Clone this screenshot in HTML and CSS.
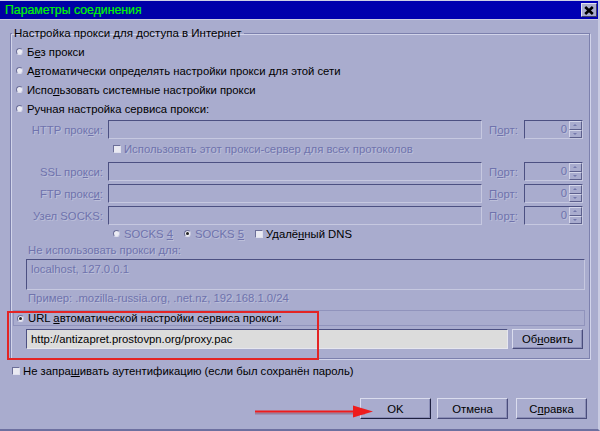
FILE: index.html
```html
<!DOCTYPE html>
<html lang="ru">
<head>
    <meta charset="UTF-8">
    <title>Параметры соединения</title>
    <link rel="stylesheet" href="styles.css">
</head>
<body>
    <div class="window">
        <div class="titlebar">
            <span class="title">Параметры соединения</span>
            <span class="close">
                <svg width="10" height="9" viewBox="0 0 10 9"><path d="M1.2 1 L8.8 8 M8.8 1 L1.2 8" stroke="#000" stroke-width="2.6"/></svg>
            </span>
        </div>

        <div class="client">
            <fieldset class="group">
                <legend>Настройка прокси для доступа в Интернет</legend>

                <div class="opt"><span class="radio"></span><span>Б<u>е</u>з прокси</span></div>
                <div class="opt"><span class="radio"></span><span>А<u>в</u>томатически определять настройки прокси для этой сети</span></div>
                <div class="opt"><span class="radio"></span><span>Испо<u>л</u>ьзовать системные настройки прокси</span></div>
                <div class="opt"><span class="radio"></span><span>Ручная настройка сервиса прокси:</span></div>

                <div class="field-row first">
                    <span class="field-label">HTTP прок<u>с</u>и:</span>
                    <span class="input"></span>
                    <span class="port-label">П<u>о</u>рт:</span>
                    <span class="port"><span class="port-value">0</span><span class="spin"><i></i><i></i></span></span>
                </div>
                <div class="check-row sub"><span class="check"></span><span>Использовать этот прокси-сервер для всех протоколов</span></div>
                <div class="field-row">
                    <span class="field-label">SSL про<u>к</u>си:</span>
                    <span class="input"></span>
                    <span class="port-label">П<u>о</u>рт:</span>
                    <span class="port"><span class="port-value">0</span><span class="spin"><i></i><i></i></span></span>
                </div>
                <div class="field-row">
                    <span class="field-label">FTP прокс<u>и</u>:</span>
                    <span class="input"></span>
                    <span class="port-label"><u>П</u>орт:</span>
                    <span class="port"><span class="port-value">0</span><span class="spin"><i></i><i></i></span></span>
                </div>
                <div class="field-row">
                    <span class="field-label">Узел SOCKS:</span>
                    <span class="input"></span>
                    <span class="port-label">Пор<u>т</u>:</span>
                    <span class="port"><span class="port-value">0</span><span class="spin"><i></i><i></i></span></span>
                </div>

                <div class="socks-row">
                    <span class="socks-item dim"><span class="radio"></span><span>SOCKS <u>4</u></span></span>
                    <span class="socks-item dim"><span class="radio on"></span><span>SOCKS <u>5</u></span></span>
                    <span class="socks-item"><span class="check"></span><span>Удалё<u>н</u>ный DNS</span></span>
                </div>

                <div class="note">Не использовать прокси для:</div>
                <div class="textarea">localhost, 127.0.0.1</div>
                <div class="note">Пример: .mozilla-russia.org, .net.nz, 192.168.1.0/24</div>

                <div class="url-opt"><span class="radio on"></span><span>URL <u>а</u>втоматической настройки сервиса прокси:</span></div>
                <div class="url-row">
                    <span class="url-input">http://antizapret.prostovpn.org/proxy.pac</span>
                    <span class="btn">Об<u>н</u>овить</span>
                </div>
            </fieldset>

            <div class="check-row auth"><span class="check"></span><span>Не запра<u>ш</u>ивать аутентификацию (если был сохранён пароль)</span></div>

            <div class="buttons">
                <span class="btn wide default">OK</span>
                <span class="btn wide">Отмена</span>
                <span class="btn wide">С<u>п</u>равка</span>
            </div>
        </div>

        <!-- annotations drawn over the dialog -->
        <div class="highlight"></div>
        <svg class="arrow" width="130" height="16" viewBox="0 0 130 16">
            <path d="M2 8.5 L112 8.5" stroke="#7a2a40" stroke-width="2" opacity="0.35" transform="translate(0 1)"/>
            <path d="M2 7.5 L112 7.5" stroke="#ee1c1c" stroke-width="2.2"/>
            <path d="M100 1.5 L120 7.5 L100 13.5 Z" fill="#ee1c1c"/>
        </svg>
    </div>
</body>
</html>
```

FILE: styles.css
```css
body {
    margin: 0;
    background: #a9acce;
    font-family: "Liberation Sans", Arial, sans-serif;
    font-size: 11.3px;
    color: #000;
}
u {
    text-decoration-thickness: 1px;
    text-underline-offset: 1px;
}

.window {
    position: relative;
    width: 600px;
    height: 431px;
    box-sizing: border-box;
    background: #a9acce;
    border-top: 1px solid #cfd1e6;
    border-right: 2px solid #c9cbe2;
    border-bottom: 2px solid #6d70a0;
    overflow: hidden;
}

.titlebar {
    height: 18px;
    background: linear-gradient(90deg, #0000a4, #0000b4);
    display: flex;
    align-items: center;
    justify-content: space-between;
    padding: 0 1px 0 5px;
    border-bottom: 1px solid #c9cbe2;
}
.title {
    color: #00f800;
    font-size: 12.3px;
    line-height: 18px;
    -webkit-text-stroke: 0.2px #00f800;
}
.close {
    width: 16px;
    height: 14px;
    box-sizing: border-box;
    background: #a9acce;
    border: 1px solid;
    border-color: #e2e3f0 #3c3f66 #3c3f66 #e2e3f0;
    display: flex;
    align-items: center;
    justify-content: center;
}

.client {
    padding: 7px 0 0 10px;
}

/* group box */
.group {
    margin: 0;
    width: 580px;
    box-sizing: border-box;
    padding: 2px 0 9px 0;
    border: 1px solid #7c80ad;
    box-shadow: inset 1px 1px 0 #d2d4ea, 1px 1px 0 #d2d4ea;
}
.group legend {
    padding: 0 2px;
    margin-left: 1px;
    line-height: 13px;
    font-size: 11.5px;
}

.radio {
    display: inline-block;
    width: 7px;
    height: 7px;
    box-sizing: border-box;
    border-radius: 50%;
    background: #ececf4;
    border: 1px solid;
    border-color: #6b6e98 #c4c6de #dfe0ee #6b6e98;
    margin-right: 4px;
    position: relative;
    flex: none;
}
.radio.on::after {
    content: "";
    position: absolute;
    left: 1px;
    top: 1px;
    width: 3px;
    height: 3px;
    border-radius: 50%;
    background: #222;
}
.check {
    display: inline-block;
    width: 8px;
    height: 8px;
    box-sizing: border-box;
    background: #e9e9f2;
    border: 1px solid;
    border-color: #6b6e98 #dfe0ee #dfe0ee #6b6e98;
    margin-right: 3px;
    flex: none;
}

.opt {
    height: 19px;
    display: flex;
    align-items: center;
    padding-left: 5px;
}

/* manual proxy fields */
.field-row {
    display: flex;
    align-items: center;
    height: 19px;
    margin-top: 3px;
    color: #6f73ad;
    text-shadow: 1px 1px 0 #bcbfda;
}
.field-row.first {
    margin-top: 2px;
}
.field-label {
    width: 97px;
    box-sizing: border-box;
    padding-right: 5px;
    text-align: right;
}
.input {
    width: 374px;
    height: 19px;
    box-sizing: border-box;
    border: 1px solid;
    border-color: #4c5082 #c6c8e0 #c6c8e0 #4c5082;
}
.port-label {
    width: 32px;
    margin-left: 7px;
}
.port {
    width: 59px;
    height: 19px;
    margin-left: 3px;
    box-sizing: border-box;
    border: 1px solid;
    border-color: #4c5082 #c6c8e0 #c6c8e0 #4c5082;
    display: flex;
}
.port-value {
    flex: 1;
    text-align: right;
    padding-right: 2px;
    line-height: 17px;
}
.spin {
    width: 13px;
    display: flex;
    flex-direction: column;
}
.spin i {
    flex: 1;
    border: 1px solid;
    border-color: #d4d6ea #5c5f8c #5c5f8c #d4d6ea;
    position: relative;
}
.spin i::after {
    content: "";
    position: absolute;
    left: 3px;
    top: 2px;
    border: 2px solid transparent;
}
.spin i:first-child::after {
    border-bottom-color: #7478ac;
    top: 0;
}
.spin i:last-child::after {
    border-top-color: #7478ac;
}

.check-row {
    display: flex;
    align-items: center;
}
.check-row.sub {
    height: 20px;
    padding-left: 102px;
    color: #6f73ad;
    text-shadow: 1px 1px 0 #bcbfda;
}

.socks-row {
    display: flex;
    align-items: center;
    height: 17px;
    padding-left: 102px;
}
.socks-item {
    display: flex;
    align-items: center;
    margin-right: 11px;
}
.socks-item.dim {
    color: #6f73ad;
    text-shadow: 1px 1px 0 #bcbfda;
}

.note {
    height: 16px;
    line-height: 16px;
    padding-left: 17px;
    color: #6f73ad;
    text-shadow: 1px 1px 0 #bcbfda;
}
.textarea {
    margin: 1px 0 0 15px;
    width: 559px;
    height: 31px;
    box-sizing: border-box;
    padding: 3px 4px;
    border: 1px solid;
    border-color: #4c5082 #c6c8e0 #c6c8e0 #4c5082;
    color: #6f73ad;
    text-shadow: 1px 1px 0 #bcbfda;
}

.url-opt {
    margin: 4px 0 0 2px;
    width: 572px;
    height: 16px;
    box-sizing: border-box;
    display: flex;
    align-items: center;
    padding-left: 3px;
    border: 1px solid #9093bc;
}
.url-row {
    display: flex;
    align-items: center;
    margin: 3px 0 0 15px;
}
.url-input {
    width: 482px;
    height: 20px;
    box-sizing: border-box;
    background: #dcdcdc;
    border: 1px solid;
    border-color: #4c5082 #e6e6ee #e6e6ee #4c5082;
    padding-left: 4px;
    line-height: 18px;
}

.btn {
    width: 71px;
    height: 20px;
    box-sizing: border-box;
    margin-left: 4px;
    border: 1px solid;
    border-color: #dadcee #4a4d7c #4a4d7c #dadcee;
    box-shadow: inset -1px -1px 0 #8a8db6;
    display: flex;
    align-items: center;
    justify-content: center;
}

.check-row.auth {
    height: 16px;
    margin-top: 4px;
    padding-left: 2px;
}

.buttons {
    display: flex;
    justify-content: flex-end;
    gap: 6px;
    margin-top: 19px;
    padding-right: 11px;
}
.btn.wide {
    width: 71px;
    height: 21px;
    margin-left: 0;
}
.btn.wide:last-child {
    margin-left: 2px;
}
.btn.default {
    border-color: #dadcee #1e2040 #1e2040 #dadcee;
}

.highlight {
    position: absolute;
    left: 7px;
    top: 310px;
    width: 312px;
    height: 49px;
    box-sizing: border-box;
    border: 2px solid #e42424;
}
.arrow {
    position: absolute;
    left: 253px;
    top: 403px;
}
```
